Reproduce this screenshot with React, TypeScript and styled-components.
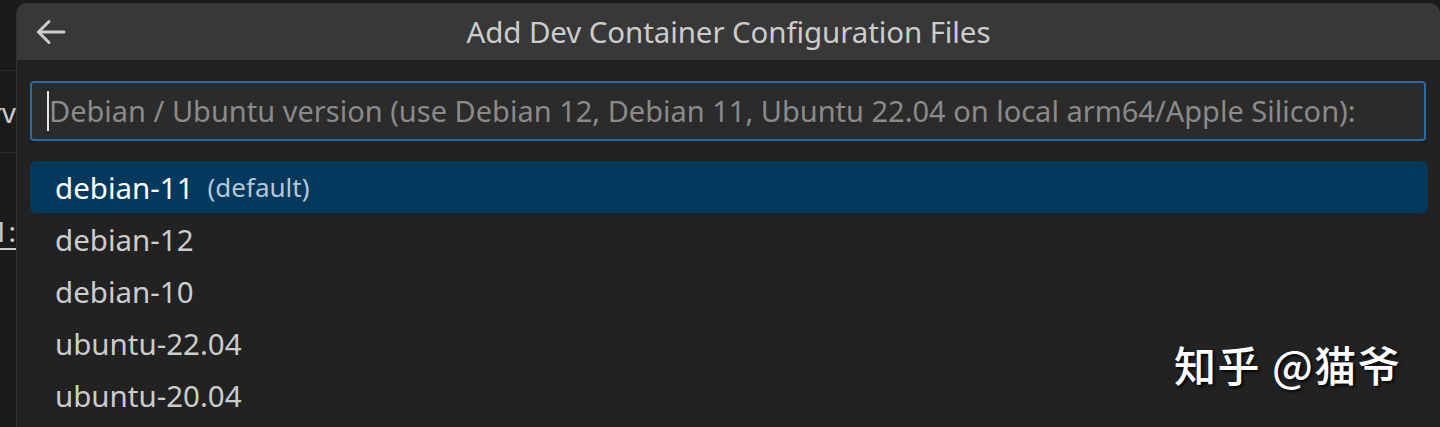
import React from 'react'
import styled, { createGlobalStyle } from 'styled-components'

const Global = createGlobalStyle`
  html, body { margin: 0; padding: 0; background: #1b1b1b; }
  body { font-family: "Noto Sans", "Open Sans", sans-serif; overflow: hidden; }
`

const Screen = styled.div`
  display: flex;
  width: 1440px;
  height: 427px;
  overflow: hidden;
  position: relative;
`

const EditorStrip = styled.div`
  width: 16px;
  flex: none;
  display: flex;
  flex-direction: column;
  overflow: hidden;
  color: #cccccc;
  font-size: 28px;
`

const StripRow = styled.div<{ h: number; line?: boolean }>`
  height: ${p => p.h}px;
  flex: none;
  display: flex;
  align-items: center;
  justify-content: flex-end;
  white-space: nowrap;
  border-bottom: ${p => (p.line ? '1px solid #2c2c2c' : 'none')};
`

const Underlined = styled.span`
  text-decoration: underline;
  text-underline-offset: 6px;
`

const Panel = styled.div`
  flex: 1;
  margin-top: 3px;
  background: #222222;
  border-radius: 11px 11px 0 0;
  border-left: 1px solid #333333;
  display: flex;
  flex-direction: column;
  overflow: hidden;
`

const TitleBar = styled.div`
  height: 57px;
  flex: none;
  background: #383838;
  display: grid;
  grid-template-columns: 1fr auto 1fr;
  align-items: center;
  padding: 0 19px;
`

const BackButton = styled.div`
  display: flex;
  align-items: center;
  color: #cccccc;
`

const Title = styled.div`
  color: #cccccc;
  font-size: 29.5px;
  letter-spacing: -0.1px;
`

const Body = styled.div`
  padding: 21px 12px 0 13px;
  display: flex;
  flex-direction: column;
`

const InputBox = styled.div`
  height: 56px;
  margin-right: 2px;
  border: 2px solid #2a6aa3;
  border-radius: 4px;
  background: #2b2b2b;
  display: flex;
  align-items: center;
  padding-left: 15px;
  overflow: hidden;
`

const Caret = styled.div`
  width: 2px;
  height: 40px;
  background: #e6e6e6;
  flex: none;
`

const Placeholder = styled.div`
  color: #8a8a8a;
  font-size: 29px;
  white-space: nowrap;
  padding-bottom: 1px;
`

const List = styled.div`
  margin-top: 20px;
  display: flex;
  flex-direction: column;
`

const Item = styled.div<{ active?: boolean }>`
  height: 52px;
  border-radius: 6px;
  background: ${p => (p.active ? '#04395e' : 'transparent')};
  color: ${p => (p.active ? '#ffffff' : '#cccccc')};
  display: flex;
  align-items: center;
  gap: 14px;
  padding-left: 25px;
  font-size: 29.5px;
`

const Label = styled.span``

const Description = styled.span`
  color: #b5c7d6;
  font-size: 26px;
`

const Watermark = styled.div`
  position: absolute;
  left: 1174px;
  top: 333px;
  color: #ffffff;
  font-family: "Noto Sans CJK SC", sans-serif;
  font-size: 42px;
  font-weight: 500;
  letter-spacing: 1.5px;
  text-shadow: 2px 2px 3px rgba(0, 0, 0, 0.85);
  white-space: nowrap;
`

const options = [
  { label: 'debian-11', description: '(default)' },
  { label: 'debian-12' },
  { label: 'debian-10' },
  { label: 'ubuntu-22.04' },
  { label: 'ubuntu-20.04' },
]

export default function App() {
  return (
    <>
      <Global />
      <Screen>
        <EditorStrip>
          <StripRow h={70} line />
          <StripRow h={81} line>rv</StripRow>
          <StripRow h={155}><Underlined>1:</Underlined></StripRow>
        </EditorStrip>
        <Panel>
          <TitleBar>
            <BackButton>
              <svg width="30" height="28" viewBox="0 0 30 28" fill="none" stroke="currentColor" strokeWidth="3" strokeLinecap="round" strokeLinejoin="round">
                <path d="M28 14H3" />
                <path d="M13 3.5L2.5 14L13 24.5" />
              </svg>
            </BackButton>
            <Title>Add Dev Container Configuration Files</Title>
            <div />
          </TitleBar>
          <Body>
            <InputBox>
              <Caret />
              <Placeholder>Debian / Ubuntu version (use Debian 12, Debian 11, Ubuntu 22.04 on local arm64/Apple Silicon):</Placeholder>
            </InputBox>
            <List>
              {options.map((o, i) => (
                <Item key={o.label} active={i === 0}>
                  <Label>{o.label}</Label>
                  {o.description && <Description>{o.description}</Description>}
                </Item>
              ))}
            </List>
          </Body>
        </Panel>
        <Watermark>知乎 @猫爷</Watermark>
      </Screen>
    </>
  )
}
